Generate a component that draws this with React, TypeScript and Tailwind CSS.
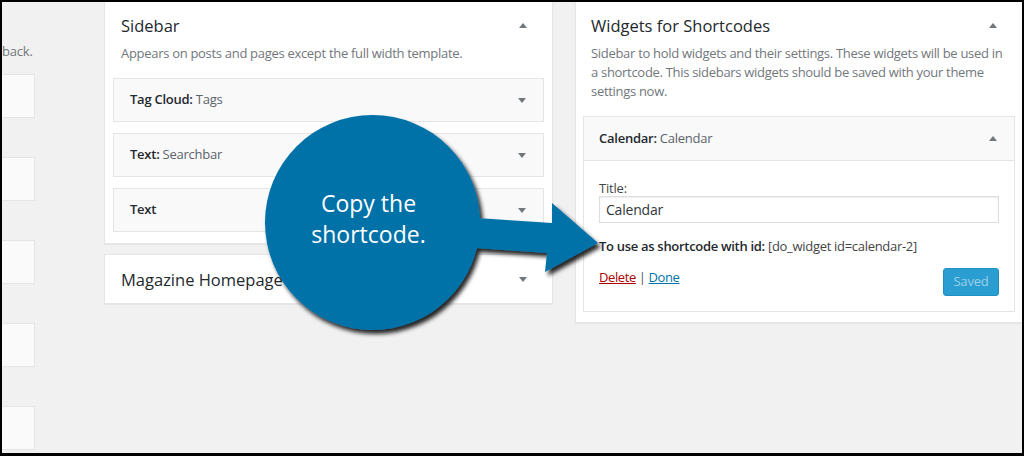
import React from "react";

function Tri({ up }: { up?: boolean }) {
  return (
    <svg width="8" height="5" viewBox="0 0 8 5" className="block shrink-0">
      <polygon points={up ? "0,5 4,0 8,5" : "0,0 8,0 4,5"} fill="#72777c" />
    </svg>
  );
}

function WidgetRow({ name, title }: { name: string; title?: string }) {
  return (
    <div className="h-[44px] border border-[#e5e5e5] bg-[#f9f9f9] flex items-center justify-between pl-[16px] pr-[17px]">
      <div className="text-[13px] tracking-[-0.25px] text-[#23282d] whitespace-nowrap">
        <span className="font-semibold">{name}</span>
        {title && <span className="text-[#5b636b]"> {title}</span>}
      </div>
      <Tri />
    </div>
  );
}

function LeftCol() {
  return (
    <div className="w-[33px] shrink-0 flex flex-col">
      <div className="mt-[40px] leading-[19px] text-[13px] tracking-[-0.2px] text-[#72777c] whitespace-nowrap">back.</div>
      <div className="mt-[13px] flex flex-col gap-[39px]">
        {[0, 1, 2, 3, 4].map((i) => (
          <div key={i} className="h-[44px] w-[43px] ml-[-10px] bg-[#fafafa] border border-[#e5e5e5]" />
        ))}
      </div>
    </div>
  );
}

function Callout() {
  return (
    <>
      <svg className="absolute left-0 top-0 pointer-events-none" width="1020" height="451" viewBox="0 0 1020 451">
        <defs>
          <filter id="sh" x="-20%" y="-20%" width="140%" height="140%">
            <feDropShadow dx="3" dy="4" stdDeviation="2" floodColor="#000" floodOpacity="0.85" />
          </filter>
        </defs>
        <g filter="url(#sh)" fill="#0672a8">
          <polygon points="460,215 550,221 550,201 596,241 543,270 545,251 460,245" />
          <circle cx="370.5" cy="220.5" r="107.5" />
        </g>
      </svg>
      <div className="absolute left-[266px] top-[186px] w-[201px] text-center text-white text-[23px] leading-[30.5px] font-['Open_Sans','Noto_Sans',sans-serif]">
        Copy the
        <br />
        shortcode.
      </div>
    </>
  );
}

export default function App() {
  return (
    <div className="w-[1024px] h-[456px] bg-black pt-[2px] pl-[2px] pr-[2px] pb-[3px] font-['Open_Sans','Noto_Sans',sans-serif]">
      <div className="relative h-full w-full overflow-hidden bg-[#f1f1f1] flex items-start">
        <LeftCol />

        {/* Sidebar column */}
        <div className="ml-[69px] w-[449px] shrink-0 flex flex-col">
          <div className="bg-white border border-t-0 border-[#e5e5e5] shadow-[0_1px_1px_rgba(0,0,0,0.04)] pb-[11px]">
            <div className="h-[42px] pt-[4px] pl-[16px] pr-[25px] flex items-center justify-between">
              <div className="text-[16.5px] text-[#23282d] leading-[24px] pt-[2px]">Sidebar</div>
              <Tri up />
            </div>
            <div className="pl-[16px] text-[13px] tracking-[-0.3px] leading-[19px] text-[#72777c] whitespace-nowrap">
              Appears on posts and pages except the full width template.
            </div>
            <div className="mt-[15px] px-[8px] flex flex-col gap-[11px]">
              <WidgetRow name="Tag Cloud:" title="Tags" />
              <WidgetRow name="Text:" title="Searchbar" />
              <WidgetRow name="Text" />
            </div>
          </div>
          <div className="mt-[10px] h-[50px] bg-white border border-[#e5e5e5] shadow-[0_1px_1px_rgba(0,0,0,0.04)] pl-[16px] pr-[25px] flex items-center justify-between">
            <div className="text-[16.5px] text-[#23282d] leading-[24px] pt-[2px]">Magazine Homepage</div>
            <Tri />
          </div>
        </div>

        {/* Widgets for Shortcodes column */}
        <div className="ml-[22px] w-[449px] shrink-0 flex flex-col">
          <div className="bg-white border border-t-0 border-[#e5e5e5] shadow-[0_1px_1px_rgba(0,0,0,0.04)] pb-[10px]">
            <div className="h-[42px] pt-[4px] pl-[15px] pr-[26px] flex items-center justify-between">
              <div className="text-[16.5px] text-[#23282d] leading-[24px] pt-[2px]">Widgets for Shortcodes</div>
              <Tri up />
            </div>
            <div className="pl-[15px] text-[13px] tracking-[-0.3px] leading-[19px] text-[#72777c] whitespace-nowrap">
              Sidebar to hold widgets and their settings. These widgets will be used in
              <br />
              a shortcode. This sidebars widgets should be saved with your theme
              <br />
              settings now.
            </div>
            <div className="mt-[15px] pl-[7px] pr-[8px]">
              <div className="border border-[#e5e5e5] bg-white">
                <div className="h-[44px] bg-[#f9f9f9] border-b border-[#e5e5e5] flex items-center justify-between pl-[15px] pr-[17px]">
                  <div className="text-[13px] tracking-[-0.25px] text-[#23282d] whitespace-nowrap">
                    <span className="font-semibold">Calendar:</span>
                    <span className="text-[#5b636b]"> Calendar</span>
                  </div>
                  <Tri up />
                </div>
                <div className="px-[15px] pt-[19px] pb-[15px]">
                  <div className="h-[17px] leading-[17px] text-[13px] tracking-[-0.2px] text-[#444]">Title:</div>
                  <div className="mt-[-1px] h-[27px] w-[400px] border border-[#ddd] shadow-[inset_0_1px_2px_rgba(0,0,0,0.07)] bg-white pl-[6px] flex items-center text-[14px] tracking-[-0.2px] text-[#32373c]">
                    Calendar
                  </div>
                  <div className="mt-[14px] leading-[19px] text-[13px] tracking-[-0.3px] text-[#444] whitespace-nowrap">
                    <span className="font-semibold text-[#23282d]">To use as shortcode with id:</span> [do_widget id=calendar-2]
                  </div>
                  <div className="mt-[12px] w-[400px] flex items-start justify-between">
                    <div className="leading-[19px] text-[13px] tracking-[-0.4px] text-[#555]">
                      <span className="text-[#a00] underline">Delete</span> | <span className="text-[#0073aa] underline">Done</span>
                    </div>
                    <div className="h-[28px] w-[56px] rounded-[3px] bg-[#2a9dd1] border border-[#2090c4] flex items-center justify-center text-[13px] tracking-[-0.2px] text-[#9dd0ea]">
                      Saved
                    </div>
                  </div>
                </div>
              </div>
            </div>
          </div>
        </div>

        <Callout />
      </div>
    </div>
  );
}
